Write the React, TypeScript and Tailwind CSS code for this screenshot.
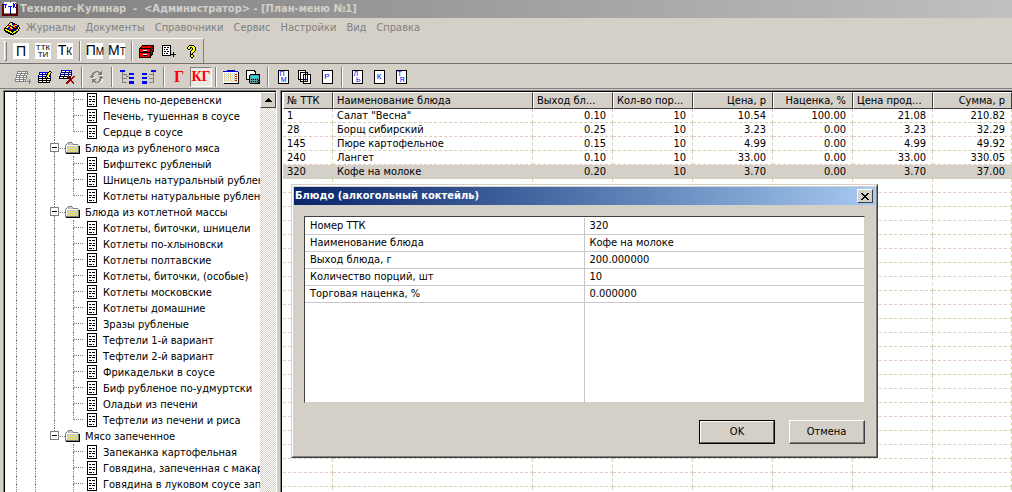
import type { ReactNode } from "react";
import clsx from "clsx";

const palette: Record<string, string> = {
  k: "#000000",
  w: "#ffffff",
  g: "#808080",
  s: "#c8c8c8",
  b: "#0000ff",
  n: "#000080",
  r: "#ff0000",
  m: "#990000",
  y: "#ffff00",
  o: "#e8e060",
  c: "#00e5ff",
  t: "#669999",
};

const Pixels = ({ rows }: { rows: string[] }) => {
  const width = Math.max(...rows.map((row) => row.length));
  return (
    <svg
      width={width}
      height={rows.length}
      viewBox={`0 0 ${width} ${rows.length}`}
      shapeRendering="crispEdges"
      className="shrink-0"
      aria-hidden="true"
    >
      {rows.flatMap((row, y) =>
        [...row].map((dot, x) =>
          palette[dot] ? (
            <rect key={`${x}-${y}`} x={x} y={y} width={1} height={1} fill={palette[dot]} />
          ) : null,
        ),
      )}
    </svg>
  );
};

const icons = {
  book: [
    "......kkk.......",
    ".....kyybkk.....",
    "....kwyybbrkk...",
    "...krrkwwrryykk.",
    "..kyyrrkkyybbkk.",
    ".kyybbyykkrrkkyk",
    "kkkbbrryykkkkbyk",
    "kyykkrrbbkkbbyk.",
    "kkyyykkkkkbbyyk.",
    ".kkkyyykkbyykk..",
    "..kkkkyykyykk...",
    "....kkkkykkk....",
    "......kkkk......",
  ],
  cabinet: [
    "...kkkkkkkkkkkk.",
    "..krrrrrrrrrrkk.",
    ".krrrrrrrrrrkmk.",
    "kkkkkkkkkkkkmmk.",
    "krrrrrrrrrrkmmk.",
    "krrrwwwwrrrkmmk.",
    "krrrkkkkrrrkmkk.",
    "kkkkkkkkkkkkmk..",
    "krrrrrrrrrrkmk..",
    "krrrwwwwrrrkmk..",
    "krrrkkkkrrrkk...",
    "krrrrrrrrrrk....",
    "kkkkkkkkkkkk....",
  ],
  addDoc: [
    "kkkkkkkkk.....",
    "kwwwwwwwk.....",
    "kwkkwkkwk.....",
    "kwwwwwwwk.....",
    "kwkwkkwwk.....",
    "kwwwwwwwk.....",
    "kwkkwkkwk.....",
    "kwwwwwwwk..k..",
    "kwkwkkwwk..k..",
    "kwwwwwwwkkkkkk",
    "kkkkkkkkk..k..",
    "...........k..",
  ],
  help: [
    "...kkkkk..",
    "..kyyyyyk.",
    ".kyykkyyyk",
    ".kyyk.kyyk",
    "..kk..kyyk",
    ".....kyyyk",
    "....kyyyk.",
    "....kyyk..",
    "....kyk...",
    "....kkk...",
    "....kyyk..",
    "....kyyk..",
    ".....kk...",
  ],
  tableAdd: [
    "..ggggggggggg...",
    "..gwwwgwwwgwg...",
    "..ggggggggggg...",
    ".gwwwgwwwgwwg...",
    ".ggggggggggg....",
    ".gwwgwwwgwwg....",
    ".ggggggggggg....",
    "gwwwgwwwgwwg....",
    "ggggggggggg...g.",
    "gwwwgwwwgwg...g.",
    "ggggggggggg.gggg",
    "..............g.",
    "..............g.",
  ],
  tableEdit: [
    "...........kk.",
    ".bbbbbbbbbkyyk",
    ".bwwbwwbwkyyk.",
    ".nnnnnnnnkyyk.",
    "nwwwnwwwkyykn.",
    "nnnnnnnnkyykn.",
    "nwwwnwwkykwwn.",
    "kkkkkkkkkkkkk.",
    "kwwwkwwwkwwwk.",
    "kkkkkkkkkkkkk.",
    "kwwwkwwwkwwk..",
    "kkkkkkkkkkkk..",
  ],
  tableDelete: [
    "..bbbbbbbbbbb...",
    "..bwwwbwwwbwb...",
    "..nnnnnnnnnnn...",
    ".nwwwnwwwnwwn...",
    ".nnnnnnnnnnnn...",
    ".nwwwnwwwnwwn...",
    "kkkkkkkkmmkk..mm",
    "kwwwkwwwkmmk.mm.",
    "kkkkkkkkkkmmmm..",
    "..........mmm...",
    ".........mmmm...",
    "........mmm.mm..",
    ".......mmm...mm.",
    ".......mm.....m.",
  ],
  refresh: [
    ".....gggg..g..",
    "...ggg..gggg..",
    "..gg.....ggg..",
    "..gg....gggg..",
    ".gg........ww.",
    "gggg......gg..",
    ".gg.w....gggg.",
    "..w.......gg..",
    "..gggg...gg.w.",
    "..ggg....gg.w.",
    "..gggg..gg.w..",
    "..g..gggg.w...",
  ],
  treeLeft: [
    "bbbbb.........",
    "bbbbb.........",
    "..g...........",
    "..g......bbbbb",
    "..ggggg..bbbbb",
    "..g...g.......",
    "..g...ggg.....",
    "..g......bbbbb",
    "..ggggg..bbbbb",
    "..g...........",
    "..g...........",
    "..g......bbbbb",
    "..ggggg..bbbbb",
    ".........bbbbb",
  ],
  treeRight: [
    ".........bbbbb",
    ".........bbbbb",
    "...........g..",
    "bbbbb......g..",
    "bbbbb..ggggg..",
    "...........g..",
    "......g....g..",
    "bbbbb......g..",
    "bbbbb..ggggg..",
    "...........g..",
    "...........g..",
    "bbbbb......g..",
    "bbbbb..ggggg..",
    "bbbbb.........",
  ],
  calendar: [
    "....nnnnnnnn....",
    "bbbbbbbbbbbbbbb.",
    "wwwwwwwwwwwwwwwk",
    "wswswswswswswswk",
    "woowoowoowoorrwk",
    "wswswswswswswswk",
    "woowoowoowoorrwk",
    "wswswswswswswswk",
    "woowoowoowoorrwk",
    "wswswswswswswswk",
    "woowoowoowoorrwk",
    "wswswswswswswswk",
    "wwwwwwwwwwwwwwwk",
    ".kkkkkkkkkkkkkkk",
  ],
  calc: [
    "kkkkkkkkk.....",
    "kwwwwwwwkk....",
    "kwwwwwwwwk....",
    "kwwwwwwwwk....",
    "kwwwkkkkkkkkkk",
    "kwwktttttttttk",
    "kwwktccccccctk",
    "kwwktccccccctk",
    "kwwktttttttttk",
    "kkkktktktktktk",
    "...kttttttttkk",
    "...ktktktktktk",
    "...kttttttttkk",
    "....kkkkkkkkkk",
  ],
  dish: [
    "kkkkkkkkkk",
    "kwwwwwwwwk",
    "kwwwwwwwwk",
    "kwkkwkkkwk",
    "kwwwwwwwwk",
    "kwwwwwwwwk",
    "kwkkkwkkwk",
    "kwwwwwwwwk",
    "kwkkwkkkwk",
    "kwwwwwwwwk",
    "kwwwwwwwwk",
    "kwkkkwkwwk",
    "kwwwwwwwwk",
    "kkkkkkkkkk",
  ],
  folder: [
    "...gggg........",
    "..gssssg.......",
    ".gssssssggggg..",
    "gwwwwwwwwwwwwg.",
    "gwosososososogk",
    "gwsosososososgk",
    "gwosososososogk",
    "gwsosososososgk",
    "gwosososososogk",
    "gwsosososososgk",
    "ggggggggggggggk",
    ".kkkkkkkkkkkkkk",
  ],
};

const ToolButton = ({
  label,
  pressed,
  children,
}: {
  label: string;
  pressed?: boolean;
  children: ReactNode;
}) => (
  <button
    type="button"
    aria-label={label}
    className={clsx(
      "flex h-5 w-[22px] shrink-0 items-center justify-center",
      pressed && "border border-t-[#808080] border-r-white border-b-white border-l-[#808080] bg-[#ebe9e4]",
    )}
  >
    {children}
  </button>
);

const Separator = () => (
  <div className="mx-[3px] h-5 w-[2px] shrink-0 border-r border-l border-r-white border-l-[#808080]" />
);

const WhiteTile = ({ children }: { children: ReactNode }) => (
  <span className="flex size-4 items-center justify-center bg-white font-['Liberation_Sans',sans-serif] text-black">
    {children}
  </span>
);

const Letters = ({ big, small }: { big: string; small?: string }) => (
  <WhiteTile>
    <span className="flex items-baseline text-[14px] leading-4">
      {big}
      {small && <span className="text-[10px]">{small}</span>}
    </span>
  </WhiteTile>
);

const Page = ({ text }: { text: string }) => (
  <span className="flex h-[14px] w-[11px] items-center justify-center border border-black bg-white font-['Liberation_Sans',sans-serif] text-[8px] leading-none text-[#0000ff]">
    {text}
  </span>
);

// two letters set as a small staircase on the sheet
const SteppedPage = ({ first, second }: { first: string; second: string }) => (
  <span className="flex h-[14px] w-[11px] flex-col border border-black bg-white px-px font-['Liberation_Sans',sans-serif] text-[7px] leading-[6px] text-[#0000ff]">
    <span className="text-left">{first}</span>
    <span className="text-right">{second}</span>
  </span>
);

const StackedPages = () => (
  <svg width="14" height="14" viewBox="0 0 14 14" shapeRendering="crispEdges" aria-hidden="true">
    <path d="M.5.5h7v9h-7zM2.5 2.5h7v9h-7zM5.5 4.5h7v9h-7z" fill="white" stroke="black" />
    <path d="M7.5 7v5M8 9.5h1M9.5 8V7M9.5 10v2" stroke="#0000ff" fill="none" />
  </svg>
);

const menu = ["Журналы", "Документы", "Справочники", "Сервис", "Настройки", "Вид", "Справка"];

const groups = [
  {
    title: "",
    dishes: ["Печень по-деревенски", "Печень, тушенная в соусе", "Сердце в соусе"],
  },
  {
    title: "Блюда из рубленого мяса",
    dishes: ["Бифштекс рубленый", "Шницель натуральный рублен", "Котлеты натуральные рублен"],
  },
  {
    title: "Блюда из котлетной массы",
    dishes: [
      "Котлеты, биточки, шницели",
      "Котлеты по-хлыновски",
      "Котлеты полтавские",
      "Котлеты, биточки, (особые)",
      "Котлеты московские",
      "Котлеты домашние",
      "Зразы рубленые",
      "Тефтели 1-й вариант",
      "Тефтели 2-й вариант",
      "Фрикадельки в соусе",
      "Биф рубленое по-удмуртски",
      "Оладьи из печени",
      "Тефтели из печени и риса",
    ],
  },
  {
    title: "Мясо запеченное",
    open: true,
    dishes: ["Запеканка картофельная", "Говядина, запеченная с макар", "Говядина в луковом соусе зап"],
  },
];

const columns = [
  { title: "№ ТТК", width: "w-[50px]" },
  { title: "Наименование блюда", width: "w-[200px]" },
  { title: "Выход бл...", width: "w-20" },
  { title: "Кол-во пор...", width: "w-20" },
  { title: "Цена, р", width: "w-20", right: true },
  { title: "Наценка, %", width: "w-20", right: true },
  { title: "Цена прод...", width: "w-20" },
  { title: "Сумма, р", width: "", right: true },
];

const dishes = [
  ["1", 'Салат "Весна"', "0.10", "10", "10.54", "100.00", "21.08", "210.82"],
  ["28", "Борщ сибирский", "0.25", "10", "3.23", "0.00", "3.23", "32.29"],
  ["145", "Пюре картофельное", "0.15", "10", "4.99", "0.00", "4.99", "49.92"],
  ["240", "Лангет", "0.10", "10", "33.00", "0.00", "33.00", "330.05"],
  ["320", "Кофе на молоке", "0.20", "10", "3.70", "0.00", "3.70", "37.00"],
];

const properties = [
  ["Номер ТТК", "320"],
  ["Наименование блюда", "Кофе на молоке"],
  ["Выход блюда, г", "200.000000"],
  ["Количество порций, шт", "10"],
  ["Торговая наценка, %", "0.000000"],
];

const Guide = ({ elbow, end }: { elbow?: boolean; end?: boolean }) => (
  <span className="flex h-4 w-[19px] shrink-0 flex-col pl-[9px]">
    <span className={clsx("h-2 border-l border-dotted border-[#808080]", elbow && "border-b")} />
    {!end && <span className="h-2 border-l border-dotted border-[#808080]" />}
  </span>
);

const Tree = () => (
  <ul className="min-w-0 flex-1 overflow-hidden pl-[2px] whitespace-nowrap">
    {groups.map(({ title, open, dishes: names }, groupIndex) => {
      const lastGroup = groupIndex === groups.length - 1;
      return (
        <li key={title}>
          {title && (
            <div className="flex h-4 items-center">
              <Guide />
              <Guide />
              <span className="flex h-4 w-[19px] shrink-0 flex-col items-center">
                <span className="h-[3px] w-px shrink-0 border-l border-dotted border-[#808080]" />
                <button
                  type="button"
                  aria-label={`Свернуть ${title}`}
                  className="flex size-[9px] shrink-0 items-center justify-center border border-[#808080] bg-white"
                >
                  <span className="h-px w-[5px] bg-black" />
                </button>
                {!lastGroup && <span className="h-1 w-px border-l border-dotted border-[#808080]" />}
              </span>
              <span className="-ml-1 w-[5px] shrink-0 border-b border-dotted border-[#808080]" />
              <Pixels rows={icons.folder} />
              <span className="ml-[5px] pt-px">{title}</span>
            </div>
          )}
          <ul>
            {names.map((name, index) => (
              <li key={name} className="flex h-4 items-center">
                <Guide />
                <Guide />
                {lastGroup ? <span className="w-[19px] shrink-0" /> : <Guide />}
                <Guide elbow end={!open && index === names.length - 1} />
                <span className="ml-1 flex shrink-0">
                  <Pixels rows={icons.dish} />
                </span>
                <span className="ml-[6px] pt-px">{name}</span>
              </li>
            ))}
          </ul>
        </li>
      );
    })}
  </ul>
);

const Scrollbar = () => (
  <div className="w-4 shrink-0 bg-[repeating-conic-gradient(#d4d0c8_0_25%,#ffffff_0_50%)] [background-size:2px_2px]">
    <button
      type="button"
      aria-label="Вверх"
      className="flex size-4 items-center justify-center border border-t-white border-r-[#404040] border-b-[#404040] border-l-white bg-[#d4d0c8]"
    >
      <Pixels rows={["...k...", "..kkk..", ".kkkkk.", "kkkkkkk"]} />
    </button>
  </div>
);

const DishTable = () => (
  <table className="w-full table-fixed border-separate border-spacing-0 whitespace-nowrap">
    <thead>
      <tr>
        {columns.map(({ title, width, right }) => (
          <th
            key={title}
            className={clsx(
              "h-[17px] overflow-hidden border border-t-white border-r-[#404040] border-b-[#404040] border-l-white bg-[#d4d0c8] py-0 leading-[15px] font-normal",
              width,
              right ? "pr-[6px] text-right" : "pl-[3px] text-left",
            )}
          >
            {title}
          </th>
        ))}
      </tr>
    </thead>
    <tbody>
      {Array.from({ length: 28 }).map((_, row) => (
        <tr key={row} className={row === 4 ? "bg-[#d4d0c8]" : ""}>
          {columns.map(({ title }, col) => (
            <td
              key={title}
              className={clsx(
                "h-[14px] overflow-hidden border-r border-b border-dashed border-r-[#d2d2b4] p-0 leading-[13px]",
                row % 2 ? "border-b-[#e4c8c4]" : "border-b-[#d2d2b4]",
                col < 2 ? "pl-1 text-left" : "pr-[6px] text-right",
              )}
            >
              {dishes[row]?.[col]}
            </td>
          ))}
        </tr>
      ))}
    </tbody>
  </table>
);

const DishDialog = () => (
  <section
    role="dialog"
    aria-label="Блюдо (алкогольный коктейль)"
    className="absolute top-[92px] left-[9px] w-[587px] border border-t-[#d4d0c8] border-r-[#404040] border-b-[#404040] border-l-[#d4d0c8] bg-[#d4d0c8]"
  >
    <div className="border border-t-white border-r-[#808080] border-b-[#808080] border-l-white p-px">
      <header className="flex h-[18px] items-center justify-between bg-linear-to-r from-[#0a246a] to-[#a6caf0] pr-[2px] pl-px font-bold text-white">
        <h2>Блюдо (алкогольный коктейль)</h2>
        <button
          type="button"
          aria-label="Закрыть"
          className="flex h-[14px] w-4 items-center justify-center border border-t-white border-r-[#404040] border-b-[#404040] border-l-white bg-[#d4d0c8]"
        >
          <Pixels
            rows={["kk....kk", ".kk..kk.", "..kkkk..", "...kk...", "..kkkk..", ".kk..kk.", "kk....kk"]}
          />
        </button>
      </header>
      <div className="px-[10px] pt-[11px] pb-[11px]">
        <div className="h-[187px] border border-t-[#404040] border-r-[#d4d0c8] border-b-[#d4d0c8] border-l-[#404040] bg-white pt-px">
          <table className="h-full w-full table-fixed border-separate border-spacing-0">
            <tbody>
              {properties.map(([name, value]) => (
                <tr key={name}>
                  <th
                    scope="row"
                    className="h-[17px] w-1/2 border-r border-b border-[#c8c8c8] py-0 pl-[5px] text-left leading-4 font-normal"
                  >
                    {name}
                  </th>
                  <td className="h-[17px] border-b border-[#c8c8c8] py-0 pl-[5px] leading-4">{value}</td>
                </tr>
              ))}
              <tr>
                <td className="border-r border-[#c8c8c8] p-0" />
                <td className="p-0" />
              </tr>
            </tbody>
          </table>
        </div>
        <div className="mt-[17px] flex justify-end gap-[14px]">
          <button type="button" className="h-6 w-[76px] border border-black">
            <span className="flex h-full items-center justify-center border border-t-white border-r-[#606060] border-b-[#606060] border-l-white">
              OK
            </span>
          </button>
          <button
            type="button"
            className="h-6 w-[76px] border border-t-white border-r-[#404040] border-b-[#404040] border-l-white"
          >
            <span className="flex h-full items-center justify-center border-r border-b border-[#808080]">
              Отмена
            </span>
          </button>
        </div>
      </div>
    </div>
  </section>
);

const AppLogo = () => (
  <svg width="16" height="14" viewBox="0 0 16 14" shapeRendering="crispEdges" aria-hidden="true">
    <path d="M0 2h2v10h5l1 1 1-1h5V2h2v12H0z" fill="#600000" />
    <path d="M2 0h5l1 1 1-1h5v11H9l-1 1-1-1H2z" fill="white" />
    <path d="M8 8v5" stroke="black" />
    <path d="M2 2.5h3M3.5 3v3M6 4.5h4M8 5v4M11.5 1v5M14 1l-2 2.5L14 6" stroke="#0000ff" fill="none" />
  </svg>
);

export default function App() {
  return (
    <div className="flex h-screen flex-col overflow-hidden bg-[#d4d0c8] font-['DejaVu_Sans_Condensed','DejaVu_Sans',sans-serif] text-[11px] leading-4 text-black">
      <header className="flex h-[18px] shrink-0 items-center gap-[2px] bg-linear-to-r from-[#808080] to-[#c0c0c0] pl-[2px]">
        <AppLogo />
        <h1 className="font-bold whitespace-pre text-[#d4d0c8]">
          {"Технолог-Кулинар  -  <Администратор> - [План-меню №1]"}
        </h1>
      </header>

      <nav className="flex h-5 shrink-0 items-center pl-1 text-[#808080]">
        <span className="mr-px shrink-0">
          <Pixels rows={icons.book} />
        </span>
        {menu.map((item) => (
          <button key={item} type="button" className="px-[5px]">
            {item}
          </button>
        ))}
      </nav>

      <div className="flex h-[25px] w-[204px] shrink-0 items-center border-t border-r border-t-white border-r-[#808080] pl-1">
        <div className="mr-[3px] h-5 w-[3px] shrink-0 border border-t-white border-r-[#808080] border-b-[#808080] border-l-white" />
        <ToolButton label="Продукты">
          <Letters big="П" />
        </ToolButton>
        <ToolButton label="ТТК и ТИ">
          <WhiteTile>
            <span className="text-center text-[8px] leading-[7px]">
              ТТК
              <br />
              ТИ
            </span>
          </WhiteTile>
        </ToolButton>
        <ToolButton label="Технологические карты">
          <Letters big="Т" small="К" />
        </ToolButton>
        <Separator />
        <ToolButton label="План-меню">
          <Letters big="П" small="М" />
        </ToolButton>
        <ToolButton label="Меню-требование">
          <Letters big="М" small="Т" />
        </ToolButton>
        <Separator />
        <ToolButton label="Архив">
          <Pixels rows={icons.cabinet} />
        </ToolButton>
        <ToolButton label="Новый документ">
          <Pixels rows={icons.addDoc} />
        </ToolButton>
        <ToolButton label="Справка">
          <Pixels rows={icons.help} />
        </ToolButton>
      </div>

      <div className="flex h-[26px] shrink-0 items-center border-t border-b border-t-[#707070] border-b-[#808080] pt-[2px] pl-3">
        <ToolButton label="Добавить блюдо">
          <Pixels rows={icons.tableAdd} />
        </ToolButton>
        <ToolButton label="Изменить блюдо">
          <Pixels rows={icons.tableEdit} />
        </ToolButton>
        <ToolButton label="Удалить блюдо">
          <Pixels rows={icons.tableDelete} />
        </ToolButton>
        <Separator />
        <ToolButton label="Обновить">
          <Pixels rows={icons.refresh} />
        </ToolButton>
        <Separator />
        <ToolButton label="Развернуть дерево">
          <Pixels rows={icons.treeLeft} />
        </ToolButton>
        <ToolButton label="Свернуть дерево">
          <Pixels rows={icons.treeRight} />
        </ToolButton>
        <Separator />
        <ToolButton label="Граммы">
          <span className="font-['Liberation_Serif',serif] text-base font-bold text-[#ff0000]">Г</span>
        </ToolButton>
        <ToolButton label="Килограммы" pressed>
          <span className="font-['Liberation_Serif',serif] text-sm font-bold text-[#ff0000]">КГ</span>
        </ToolButton>
        <Separator />
        <ToolButton label="Календарь">
          <Pixels rows={icons.calendar} />
        </ToolButton>
        <ToolButton label="Расчет">
          <Pixels rows={icons.calc} />
        </ToolButton>
        <Separator />
        <ToolButton label="Печать план-меню">
          <SteppedPage first="П" second="М" />
        </ToolButton>
        <ToolButton label="Печать карт">
          <StackedPages />
        </ToolButton>
        <ToolButton label="Печать расчета">
          <Page text="Р" />
        </ToolButton>
        <Separator />
        <ToolButton label="Лист выдачи">
          <SteppedPage first="Л" second="Ь" />
        </ToolButton>
        <ToolButton label="Калькуляция">
          <Page text="К" />
        </ToolButton>
        <ToolButton label="Требование">
          <SteppedPage first="Т" second="Я" />
        </ToolButton>
      </div>

      <main className="flex min-h-0 flex-1 gap-[3px] pt-px pl-[3px]">
        <aside className="flex w-[274px] shrink-0 border-t border-r border-l border-t-[#808080] border-r-white border-l-[#808080]">
          <div className="flex min-w-0 flex-1 border-t border-l border-black bg-white">
            <Tree />
            <Scrollbar />
          </div>
        </aside>
        <section className="flex min-w-0 flex-1 border-t border-l border-[#808080]">
          <div className="min-w-0 flex-1 border-t border-l border-black bg-white">
            <div className="relative pl-px">
              <DishTable />
              <DishDialog />
            </div>
          </div>
        </section>
      </main>
    </div>
  );
}
